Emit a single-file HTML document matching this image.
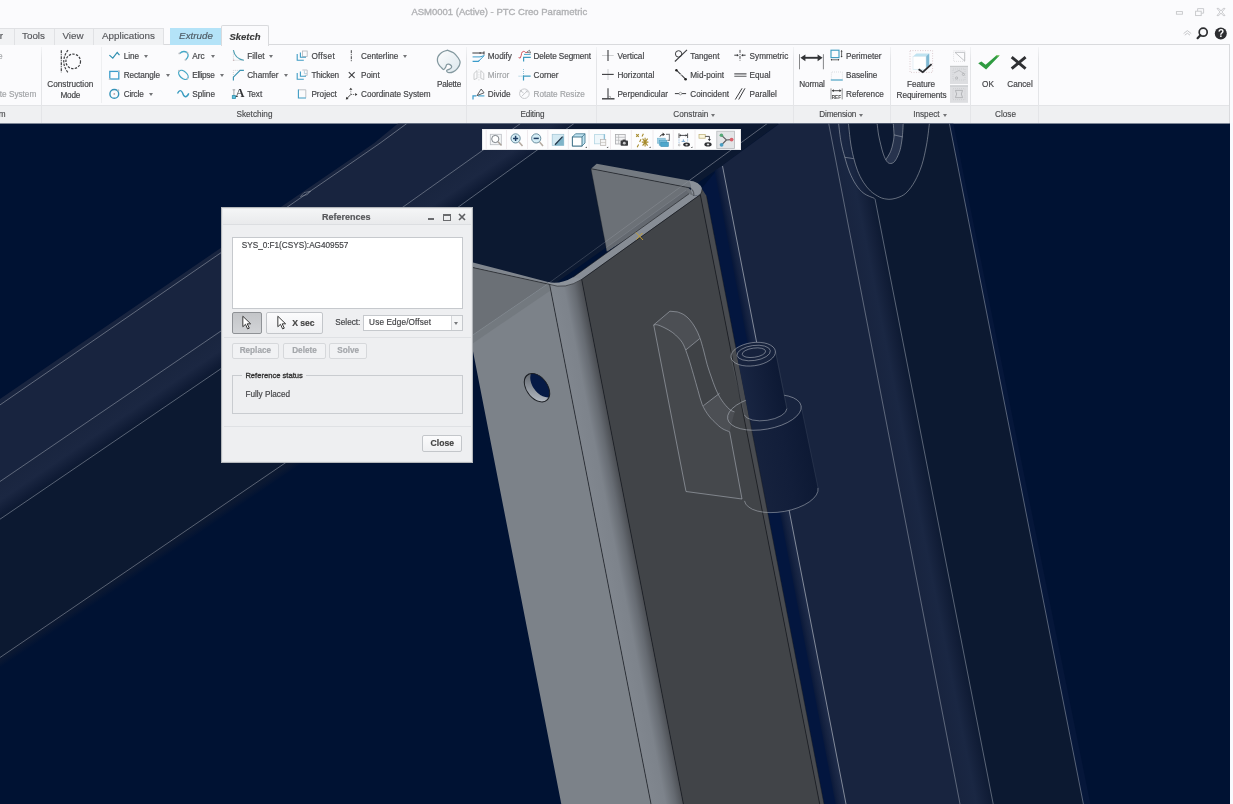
<!DOCTYPE html><html><head><meta charset="utf-8"><title>Creo</title><style>
*{box-sizing:border-box}
html,body{margin:0;padding:0}
body{width:1233px;height:804px;overflow:hidden;position:relative;background:#fbfbfd;font-family:"Liberation Sans",sans-serif;font-size:8.2px;color:#444548}
.a{position:absolute}
.t{position:absolute;white-space:nowrap;line-height:10px;height:10px;-webkit-text-stroke:0.18px}
.g{color:#a2a4a7}
.sep{position:absolute;width:1px;background:linear-gradient(#f3f4f6,#e4e5e8 12px);top:47px;height:76px}
.dd{position:absolute;width:0;height:0;border-left:2.8px solid transparent;border-right:2.8px solid transparent;border-top:3.2px solid #737477}
.tab{position:absolute;top:28px;height:17px;background:#f1f2f4;border:1px solid #e0e1e4;border-bottom:none;font-size:9.8px;line-height:14.6px;color:#55565a;-webkit-text-stroke:0.15px #55565a;text-align:center}
.gl{position:absolute;top:110px;line-height:10px;white-space:nowrap;color:#4a4b4e;-webkit-text-stroke:0.15px}
</style></head><body><div id="root" style="position:absolute;left:0;top:0;width:1233px;height:804px;will-change:transform">
<div class="t" style="left:411.4px;top:6px;font-size:9.5px;line-height:12px;height:12px;color:#b0b1b4;-webkit-text-stroke:0.35px #b0b1b4">ASM0001 (Active) - PTC Creo Parametric</div>
<div class="a" style="left:0;top:44px;width:1230px;height:80px;background:#fbfbfd;border-top:1px solid #d9dadd;border-right:1px solid #d9dadd"></div>
<div class="a" style="left:0;top:105px;width:1229px;height:18px;background:#eff0f2;border-top:1px solid #e3e4e7"></div>
<div class="tab" style="left:-6px;width:21px;text-align:right;padding-right:11px">r</div>
<div class="tab" style="left:14px;width:41px;padding-right:2px">Tools</div>
<div class="tab" style="left:54px;width:40px;padding-right:2px">View</div>
<div class="tab" style="left:93px;width:71px">Applications</div>
<div class="tab" style="left:170px;width:52px;background:#b4e3f8;border-color:#b4e3f8;font-style:italic;color:#4a5a66">Extrude</div>
<div class="tab" style="left:221px;top:25px;height:21px;width:48px;background:#fbfbfd;border-color:#d9dadd;font-style:italic;font-weight:bold;color:#333;font-size:9.5px;line-height:21px;border-radius:2px 2px 0 0">Sketch</div>
<div class="sep" style="left:41px"></div>
<div class="sep" style="left:466px"></div>
<div class="sep" style="left:596px"></div>
<div class="sep" style="left:793px"></div>
<div class="sep" style="left:890px"></div>
<div class="sep" style="left:970px"></div>
<div class="sep" style="left:1038px"></div>
<div class="sep" style="left:101px;height:56px;top:47px;background:#eeeff1"></div>
<div class="t g" style="left:-2px;top:51.7px">e</div>
<div class="t g" style="left:-0.2px;top:89.7px">te System</div>
<div class="t" style="left:47.3px;top:79.6px;width:46px;text-align:center">Construction</div>
<div class="t" style="left:47.3px;top:90.5px;width:46px;text-align:center;letter-spacing:-0.25px">Mode</div>
<div class="t " style="left:123.7px;top:51.7px">Line</div>
<div class="dd" style="left:144.0px;top:54.5px"></div>
<div class="t " style="left:123.7px;top:70.7px;letter-spacing:-0.07px">Rectangle</div>
<div class="dd" style="left:165.5px;top:73.5px"></div>
<div class="t " style="left:123.7px;top:89.7px;letter-spacing:-0.18px">Circle</div>
<div class="dd" style="left:149.3px;top:92.5px"></div>
<div class="t " style="left:192.2px;top:51.7px">Arc</div>
<div class="dd" style="left:210.9px;top:54.5px"></div>
<div class="t " style="left:192.2px;top:70.7px;letter-spacing:-0.26px">Ellipse</div>
<div class="dd" style="left:220.3px;top:73.5px"></div>
<div class="t " style="left:192.2px;top:89.7px">Spline</div>
<div class="t " style="left:247.2px;top:51.7px">Fillet</div>
<div class="dd" style="left:268.5px;top:54.5px"></div>
<div class="t " style="left:247.2px;top:70.7px">Chamfer</div>
<div class="dd" style="left:284.2px;top:73.5px"></div>
<div class="t " style="left:247.2px;top:89.7px">Text</div>
<div class="t " style="left:311.4px;top:51.7px;letter-spacing:0.32px">Offset</div>
<div class="t " style="left:311.4px;top:70.7px;letter-spacing:-0.16px">Thicken</div>
<div class="t " style="left:311.4px;top:89.7px">Project</div>
<div class="t " style="left:361px;top:51.7px">Centerline</div>
<div class="dd" style="left:402.9px;top:54.5px"></div>
<div class="t " style="left:361px;top:70.7px">Point</div>
<div class="t " style="left:361px;top:89.7px">Coordinate System</div>
<div class="t" style="left:434px;top:79.6px;width:30px;text-align:center;letter-spacing:-0.2px">Palette</div>
<div class="t " style="left:487.8px;top:51.7px">Modify</div>
<div class="t g" style="left:487.8px;top:70.7px">Mirror</div>
<div class="t " style="left:487.8px;top:89.7px">Divide</div>
<div class="t " style="left:533.5px;top:51.7px;letter-spacing:-0.09px">Delete Segment</div>
<div class="t " style="left:533.5px;top:70.7px">Corner</div>
<div class="t g" style="left:533.5px;top:89.7px">Rotate Resize</div>
<div class="t " style="left:617.4px;top:51.7px">Vertical</div>
<div class="t " style="left:617.4px;top:70.7px">Horizontal</div>
<div class="t " style="left:617.4px;top:89.7px">Perpendicular</div>
<div class="t " style="left:690.3px;top:51.7px">Tangent</div>
<div class="t " style="left:690.3px;top:70.7px">Mid-point</div>
<div class="t " style="left:690.3px;top:89.7px">Coincident</div>
<div class="t " style="left:749.6px;top:51.7px">Symmetric</div>
<div class="t " style="left:749.6px;top:70.7px">Equal</div>
<div class="t " style="left:749.6px;top:89.7px">Parallel</div>
<div class="t" style="left:797px;top:79.6px;width:30px;text-align:center;letter-spacing:-0.15px">Normal</div>
<div class="t " style="left:846px;top:51.7px">Perimeter</div>
<div class="t " style="left:846px;top:70.7px">Baseline</div>
<div class="t " style="left:846px;top:89.7px">Reference</div>
<div class="t" style="left:891px;top:79.6px;width:60px;text-align:center">Feature</div>
<div class="t" style="left:891px;top:90.5px;width:61px;text-align:center;letter-spacing:-0.1px">Requirements</div>
<div class="t" style="left:973px;top:79.6px;width:30px;text-align:center">OK</div>
<div class="t" style="left:1000px;top:79.6px;width:40px;text-align:center">Cancel</div>
<div class="gl" style="left:-1.2px">m</div>
<div class="gl" style="left:236.5px">Sketching</div>
<div class="gl" style="left:520.5px;letter-spacing:-0.18px">Editing</div>
<div class="gl" style="left:673.3px">Constrain</div><div class="dd" style="left:711.3px;top:113.6px"></div>
<div class="gl" style="left:819.3px;letter-spacing:-0.2px">Dimension</div><div class="dd" style="left:859.3px;top:113.6px"></div>
<div class="gl" style="left:913.2px">Inspect</div><div class="dd" style="left:942.8px;top:113.6px"></div>
<div class="gl" style="left:995px">Close</div>
<svg class="a" style="left:0;top:44px" width="1233" height="62" viewBox="0 44 1233 62">
<defs><linearGradient id="pal" x1="0" y1="0" x2="1" y2="1"><stop offset="0" stop-color="#fdfdfe"/><stop offset="1" stop-color="#dbe6ec"/></linearGradient></defs>
<g fill="none" stroke-linecap="butt">
<!-- construction -->
<path d="M61.3,50.2V72.6" stroke="#3f4043" stroke-width="1.2" stroke-dasharray="3 1 1 1"/>
<path d="M68,50.2 Q59.5,61.4 68,72.6" stroke="#3f4043" stroke-width="1.2" stroke-dasharray="2.4 1.2"/>
<circle cx="73.2" cy="61.4" r="7.3" stroke="#3f4043" stroke-width="1.2" stroke-dasharray="2.4 1.3"/>
<!-- line / rectangle / circle -->
<path d="M109.4,55.1 L112.8,58.1 L117.2,52.5 L119.5,55.1" stroke="#2f8fb0" stroke-width="1.2"/>
<rect x="109.8" y="71.4" width="9" height="7.6" stroke="#3b9ccb" stroke-width="1.3"/><circle cx="109.6" cy="79.2" r="0.9" fill="#c5c8cc" stroke="none"/><circle cx="119" cy="71.2" r="0.9" fill="#c5c8cc" stroke="none"/>
<circle cx="114.3" cy="93.9" r="4.4" stroke="#3593b8" stroke-width="1.4"/><circle cx="114.3" cy="93.9" r="0.9" fill="#b9a3a6" stroke="none"/><circle cx="118.3" cy="90.2" r="1" fill="#b4bcc4" stroke="none"/>
<!-- arc / ellipse / spline -->
<path d="M179.6,53.6 Q183,50.2 186.8,52.4 Q190,55.8 185.7,59.8" stroke="#43a7c6" stroke-width="1.3"/><circle cx="179.3" cy="53.4" r="0.9" fill="#b8bcc1" stroke="none"/><circle cx="187.5" cy="52.6" r="0.9" fill="#b8bcc1" stroke="none"/><circle cx="185.4" cy="59.8" r="0.9" fill="#b8bcc1" stroke="none"/>
<ellipse cx="183.4" cy="74.9" rx="5.6" ry="3.4" transform="rotate(42 183.4 74.9)" stroke="#43a7c6" stroke-width="1.3"/><circle cx="179" cy="70.6" r="0.8" fill="#b8bcc1" stroke="none"/><circle cx="187.4" cy="78.6" r="0.8" fill="#b8bcc1" stroke="none"/>
<path d="M177.5,93.6 C179,90 181.2,89.4 182.6,93 C184,97.6 186.6,98.2 188.8,93.4" stroke="#3a9cc0" stroke-width="1.4"/>
<!-- fillet / chamfer / text -->
<path d="M233.4,50.4V60.3H243.9" stroke="#b9bdc2" stroke-width="0.7" stroke-dasharray="1 1"/><path d="M233.4,50.2 Q235,59 243.9,60.3" stroke="#4f9fb3" stroke-width="1.1"/><circle cx="233.6" cy="60.3" r="0.8" fill="#c9b7ba" stroke="none"/>
<path d="M233.4,77V70.4H240.2" stroke="#b9bdc2" stroke-width="0.7" stroke-dasharray="1 1"/><path d="M233.4,80.4V77.2L240.1,70.4H243.9" stroke="#3d95b3" stroke-width="1.2"/>
<path d="M232.6,89.8h2.6M233.9,89.8V96" stroke="#8d9096" stroke-width="0.8"/><rect x="232.3" y="95.6" width="3.2" height="2.8" fill="#5fc0dc" stroke="#2c8fae" stroke-width="0.8"/>
<!-- offset / thicken / project -->
<rect x="302.4" y="51" width="4.8" height="5.4" stroke="#b3b6bb" stroke-width="0.8"/><path d="M300.4,52.6V57.3H306" stroke="#3f9cc4" stroke-width="1.1"/><path d="M297.2,54V60.3H303.8" stroke="#3f9cc4" stroke-width="1.1"/>
<path d="M302.4,70 h4.8v5.4h-2.4" stroke="#b3b6bb" stroke-width="0.8"/><path d="M304.4,70.6v3h2.6" stroke="#a6c5d6" stroke-width="0.8"/><path d="M300.4,71.6V76.3H306" stroke="#3f9cc4" stroke-width="1.1"/><path d="M297.2,73V79.3H303.8" stroke="#3f9cc4" stroke-width="1.1"/>
<path d="M298.4,89.8H305.8V97.6" stroke="#b9bcc1" stroke-width="0.9"/><path d="M298.4,89.6V98H306" stroke="#3f9cc4" stroke-width="1.1"/>
<!-- centerline / point / csys -->
<path d="M351.3,50.2V61.8" stroke="#444548" stroke-width="1" stroke-dasharray="3 1 1 1"/>
<path d="M348.8,72.2L354.6,77.8M354.6,72.2L348.8,77.8" stroke="#3c3d40" stroke-width="1.1"/>
<path d="M350.8,94.3V89.6" stroke="#555" stroke-width="0.8" stroke-dasharray="1 1"/><path d="M350.8,94.5H355.4" stroke="#555" stroke-width="0.8" stroke-dasharray="1.2 0.8"/><path d="M350.8,94.5L347.2,98.2" stroke="#333" stroke-width="0.9"/>
<path d="M349.2,89.8h3.2l-1.6,-2z M355.2,93h0l2.2,1.5l-2.2,1.5z M345.8,99.5l0.6,-2.8l2.2,2.2z" fill="#333" stroke="none"/>
<!-- palette -->
<path d="M447.5,50.2 C446.8,50.4 444.8,50.9 443.5,51.5 C442.2,52.1 440.9,53.1 440.0,54.0 C439.1,54.9 438.3,56.0 437.9,57.0 C437.5,58.0 437.4,59.0 437.4,59.9 C437.4,60.8 437.6,61.7 437.9,62.6 C438.2,63.5 438.6,64.3 439.2,65.1 C439.8,65.9 440.5,66.7 441.2,67.4 C441.9,68.1 442.9,69.5 443.6,69.5 C444.3,69.5 445.0,68.3 445.5,67.5 C446.0,66.7 446.2,65.3 446.7,64.7 C447.2,64.1 448.0,64.0 448.7,64.1 C449.4,64.2 450.6,64.9 451.1,65.5 C451.6,66.1 451.8,66.9 451.5,67.5 C451.2,68.1 450.3,68.6 449.5,69.1 C448.7,69.6 447.3,69.9 446.9,70.3 C446.5,70.7 446.5,71.2 446.9,71.6 C447.3,72.0 448.1,72.7 449.1,72.7 C450.1,72.8 451.7,72.6 453.1,71.9 C454.5,71.2 456.3,69.8 457.5,68.3 C458.7,66.8 460.0,64.4 460.1,62.7 C460.2,61.0 459.4,59.6 458.3,58.0 C457.2,56.4 455.3,54.1 453.5,52.8 C451.7,51.5 448.5,50.6 447.5,50.2 Z" fill="url(#pal)" stroke="#83989f" stroke-width="1.25" stroke-linejoin="round"/>
<!-- modify / mirror / divide -->
<path d="M472.4,53H484M484,51.4V54.6" stroke="#3a3b3e" stroke-width="1"/><path d="M481.4,53l-1.8,-1v2z" fill="#3a3b3e" stroke="none"/><path d="M472.6,56.9H480L484.2,55.6L479,60.8" stroke="#3b9ccb" stroke-width="1"/><path d="M472.6,61.4H478.4L479.6,60.2" stroke="#3b9ccb" stroke-width="1.1"/>
<path d="M474,79.6V73.4L477,70.6V78.4Z M483.8,79.6V73.4L480.8,70.6V78.4Z" stroke="#c5c7ca" stroke-width="0.9"/><path d="M478.9,69V80.8" stroke="#d2d4d7" stroke-width="0.7" stroke-dasharray="1.5 1"/>
<path d="M473,99.4V95.9H476.4" stroke="#3b9ccb" stroke-width="1.2"/><path d="M478,95.9H484.4" stroke="#3b9ccb" stroke-width="1.1"/><path d="M477,95.6L481.2,89L484,92.8Z" stroke="#4b4c4f" stroke-width="0.9"/>
<!-- delete segment / corner / rotate -->
<path d="M518.6,57.6 Q520.4,59.6 521.2,55.6 Q521.6,50.4 524.6,51.6 Q525.6,53.6 527.6,52" stroke="#d2545b" stroke-width="1"/><path d="M527,52.2l2.4,-2l1.2,2.8z" stroke="#55565a" stroke-width="0.7"/><path d="M523.6,61.5V57.3H530.8" stroke="#3d9bc0" stroke-width="1.2"/><path d="M524,54.4H530.6" stroke="#3d9bc0" stroke-width="0.9"/>
<path d="M523.5,69V76M518.6,76.2H523" stroke="#7cb7d0" stroke-width="0.8" stroke-dasharray="1 1"/><path d="M523.5,80.6V76.2H530.6" stroke="#3d9bc0" stroke-width="1.2"/>
<circle cx="524.4" cy="93.7" r="4.8" stroke="#c3c5c8" stroke-width="0.9"/><path d="M521.6,96.4L527.2,91M521,91.2l2.6,1.8" stroke="#c3c5c8" stroke-width="0.9"/><path d="M527.8,90.4l-2.4,0.4l2,2z M519.6,89.8l2.6,0.4l-1.6,2z" fill="#c3c5c8" stroke="none"/>
<!-- vertical / horizontal / perpendicular -->
<path d="M602,55.5H613.7" stroke="#c7c9cc" stroke-width="0.9"/><path d="M608,49.9V61" stroke="#3c3d40" stroke-width="1.1"/>
<path d="M608,69V80" stroke="#c7c9cc" stroke-width="0.9"/><path d="M602,74.4H613.7" stroke="#3c3d40" stroke-width="1.1"/>
<path d="M608,88.3V98.6" stroke="#3c3d40" stroke-width="1.1"/><path d="M602,98.8H614.5" stroke="#3c3d40" stroke-width="1.4"/><path d="M608.2,96.4h2.2v2.2" stroke="#77787b" stroke-width="0.6"/>
<!-- tangent / midpoint / coincident -->
<circle cx="678.6" cy="53.9" r="3.2" stroke="#3c3d40" stroke-width="1"/><path d="M674.9,61.5L687,49.9" stroke="#3c3d40" stroke-width="1.1"/>
<path d="M676.4,70.2L685.6,79.2" stroke="#3c3d40" stroke-width="1.1"/><circle cx="676.4" cy="70.2" r="1.2" fill="#222" stroke="none"/><circle cx="685.6" cy="79.2" r="1.3" fill="#222" stroke="none"/><circle cx="681" cy="74.7" r="0.9" fill="#c9cacc" stroke="none"/>
<path d="M674.9,93.6H679M681.8,93.6H686.1" stroke="#3c3d40" stroke-width="1"/><circle cx="680.4" cy="93.6" r="1.3" fill="#fff" stroke="#77787b" stroke-width="0.7"/>
<!-- symmetric / equal / parallel -->
<path d="M740,49.9V60.6" stroke="#3c3d40" stroke-width="0.9" stroke-dasharray="3 1 1 1"/><path d="M734.3,55.2H738M745.6,55.2H742" stroke="#3c3d40" stroke-width="1"/><path d="M738.9,55.2l-2,-1.3v2.6z M741.1,55.2l2,-1.3v2.6z" fill="#3c3d40" stroke="none"/>
<path d="M734.3,73.9H746.5M734.3,76.2H746.5" stroke="#5a5b5e" stroke-width="1.1"/>
<path d="M735.3,99.5L742.1,88.3M738.7,99.5L745,88.3" stroke="#3c3d40" stroke-width="1"/>
<!-- normal -->
<path d="M799.5,54.2V69.3M823.4,54.2V69.3" stroke="#77787b" stroke-width="0.9"/><path d="M803.6,57.8H819.4" stroke="#333437" stroke-width="1.9"/><path d="M800.4,57.8l5,-3.4v6.8z M822.6,57.8l-5,-3.4v6.8z" fill="#333437" stroke="none"/>
<!-- perimeter / baseline / reference -->
<rect x="831" y="50.2" width="8" height="7.4" stroke="#3d9bc0" stroke-width="1.1"/><path d="M841.6,51v5.6M831.6,59.8h6.8" stroke="#444" stroke-width="0.8"/><path d="M840.6,51.6l1,-1.6l1,1.6z M840.6,56l1,1.6l1,-1.6z M832,58.8l-1.4,1l1.4,1z M838,58.8l1.4,1l-1.4,1z" fill="#333" stroke="none"/>
<path d="M831.4,79.4V72H842.4V79.4" stroke="#cfd1d4" stroke-width="0.7" stroke-dasharray="1 1"/><path d="M830.8,80H842.8" stroke="#3d9bc0" stroke-width="1.1"/>
<path d="M831,88.4V99.4M842.2,88.4V99.4" stroke="#77787b" stroke-width="0.8"/><path d="M832.6,90.7H840.6" stroke="#333" stroke-width="0.9"/><path d="M831.6,90.7l2.2,-1.4v2.8z M841.6,90.7l-2.2,-1.4v2.8z" fill="#333" stroke="none"/>
<!-- feature requirements -->
<rect x="910" y="50.6" width="22.6" height="21.8" stroke="#d6c3c6" stroke-width="0.9" stroke-dasharray="0.9 1.6"/>
<path d="M913,56.4L916.4,53.4H929.2V66L926,69.2H913Z" fill="#bfe2f0" stroke="none"/><path d="M926,56.4L929.2,53.4V66L926,69.2Z" fill="#7fb9d3" stroke="none"/><rect x="913" y="56.4" width="13" height="12.8" fill="#fff" stroke="#cfe4ee" stroke-width="0.5"/>
<path d="M918.6,69.2L922.8,72.2L931.6,64.2" stroke="#2b2c2f" stroke-width="1.8"/>
<!-- small inspect icons -->
<rect x="953.6" y="50.8" width="11.4" height="10.6" stroke="#d5d6d9" stroke-width="0.7" stroke-dasharray="1 1"/><path d="M955,52.4L964.6,61V52.4Z" stroke="#b5b7ba" stroke-width="0.8"/>
<rect x="950" y="66" width="18" height="18" fill="#dddee1" stroke="none"/><path d="M950,66.3h18" stroke="#b9bbbe" stroke-width="0.8"/><rect x="953" y="69" width="12" height="11" stroke="#c5c6c9" stroke-width="0.6" stroke-dasharray="1 1"/><path d="M954,73L959,70.4L964,73.6" stroke="#b7b9bc" stroke-width="0.8"/><circle cx="956.6" cy="78" r="1.1" stroke="#a9abae" stroke-width="0.7"/><circle cx="963.4" cy="74.4" r="1.1" stroke="#a9abae" stroke-width="0.7"/>
<rect x="950" y="85.6" width="18" height="17.2" fill="#dddee1" stroke="none"/><path d="M950,85.9h18" stroke="#b9bbbe" stroke-width="0.8"/><rect x="953" y="88.6" width="12" height="11" stroke="#c5c6c9" stroke-width="0.6" stroke-dasharray="1 1"/><path d="M955.4,90.4H962.6 Q960,94 962.6,97.6H955.4Q958,94 955.4,90.4Z" stroke="#a9abae" stroke-width="0.8"/>
</g>
<!-- OK / cancel -->
<path d="M978.2,63.2L981.4,61.4L985.6,64.8L996.6,55.2L999.6,55.4L986.1,69.4Z" fill="#2f9b41"/><path d="M996.6,55.2L999.6,55.4L998.4,56.6L995.6,56.1Z" fill="#8fd06a"/>
<path d="M1011.7,57.2L1025.6,68.7M1025.6,57.2L1011.7,68.7" stroke="#2f3033" stroke-width="2.9" fill="none"/>
<!-- Text "A" -->
<text x="235.6" y="97.4" font-family="Liberation Serif, serif" font-weight="bold" font-size="12.4" fill="#333437">A</text>
<text x="831.8" y="98.6" font-family="Liberation Sans, sans-serif" font-weight="bold" font-size="4.6" fill="#444">REF</text>
</svg>
<!-- window controls -->
<svg class="a" style="left:1170px;top:0" width="63" height="44" viewBox="1170 0 63 44">
<g fill="none" stroke="#c5c6c9" stroke-width="0.9">
<rect x="1176.4" y="11.6" width="6" height="2.6"/>
<rect x="1195.6" y="11.2" width="5.6" height="4.4"/><path d="M1197.6,11V8.6H1203.6V13.2H1201.4"/>
<path d="M1217,8.4l1.8,0l2.2,2.6l2.2,-2.6l1.8,0l-3,3.6l3,3.6l-1.8,0l-2.2,-2.6l-2.2,2.6l-1.8,0l3,-3.6z"/>
<path d="M1183.6,33.6L1187.4,30.6L1191.2,33.6M1184.8,35.2L1187.4,33.2L1190,35.2" stroke="#c0c1c4"/>
</g>
<circle cx="1203.2" cy="32.2" r="4" fill="none" stroke="#2d2e31" stroke-width="1.7"/><path d="M1200.4,35.2L1197.6,38.2" stroke="#2d2e31" stroke-width="2.2" stroke-linecap="round"/>
<circle cx="1220.8" cy="33.4" r="6" fill="#2d2e31"/>
<text x="1217.9" y="37" font-family="Liberation Sans, sans-serif" font-weight="bold" font-size="10" fill="#fff">?</text>
</svg>

<svg class="a" style="left:0;top:0" width="1233" height="804" viewBox="0 0 1233 804">
<defs>
<clipPath id="vp"><rect x="0" y="123.5" width="1230.2" height="681"/></clipPath>
<linearGradient id="g23" gradientUnits="userSpaceOnUse" x1="300" y1="277" x2="317.7" y2="303"><stop offset="0" stop-color="#19253f"/><stop offset="0.5" stop-color="#1b2742"/><stop offset="0.85" stop-color="#101c36"/><stop offset="1" stop-color="#0c1931"/></linearGradient>
<linearGradient id="gBC" gradientUnits="userSpaceOnUse" x1="866" y1="321" x2="899" y2="314.5"><stop offset="0" stop-color="#18243f"/><stop offset="0.45" stop-color="#1a2743"/><stop offset="0.78" stop-color="#121e38"/><stop offset="1" stop-color="#0c1931"/></linearGradient>
<linearGradient id="gC" gradientUnits="userSpaceOnUse" x1="573.5" y1="413" x2="606" y2="406.6"><stop offset="0" stop-color="#81878f"/><stop offset="0.45" stop-color="#7d838b"/><stop offset="0.75" stop-color="#666b72"/><stop offset="1" stop-color="#4a4d52"/></linearGradient>
<linearGradient id="gPL" gradientUnits="userSpaceOnUse" x1="743.5" y1="321.7" x2="752.5" y2="320"><stop offset="0" stop-color="#07173a"/><stop offset="0.45" stop-color="#14213f"/><stop offset="1" stop-color="#1d2a48"/></linearGradient>
<linearGradient id="gE5" gradientUnits="userSpaceOnUse" x1="200" y1="521" x2="205.6" y2="529.3"><stop offset="0" stop-color="#0c1931"/><stop offset="0.35" stop-color="#0b1832"/><stop offset="1" stop-color="#001233"/></linearGradient>
</defs>
<g clip-path="url(#vp)">
<rect x="0" y="120" width="1233" height="700" fill="#001233"/>
<polygon points="0.0,399.0 374.0,143.2 398.0,123.5 520.5,123.5 403.2,206.9 0.0,481.5" fill="#18243f" />
<polygon points="0.0,481.5 403.2,206.9 520.5,123.5 574.0,123.5 458.5,206.9 0.0,519.2" fill="url(#g23)" />
<polygon points="0.0,519.2 458.5,206.9 574.0,123.5 779.0,123.5 716.0,170.0 553.0,285.0 549.0,283.0 0.0,657.5" fill="#0c1931" />
<polygon points="0.0,657.0 549.0,282.6 557.0,289.0 0.0,669.0" fill="url(#gE5)" />
<polygon points="702.0,188.0 716.0,171.0 837.0,804.0 823.0,804.0" fill="#03163f" />
<polygon points="779.7,123.5 716.0,170.0 837.0,804.0 960.0,804.0 828.7,123.5" fill="#18243f" />
<polygon points="714.5,171.0 835.5,804.0 846.0,804.0 722.5,166.0" fill="url(#gPL)" />
<polygon points="828.7,123.5 960.0,804.0 993.2,804.0 860.3,123.5" fill="url(#gBC)" />
<polygon points="860.3,123.5 993.2,804.0 1083.4,804.0 949.4,123.5" fill="#0c1931" />
<polygon points="949.4,123.5 1083.4,804.0 1090.4,804.0 953.4,123.5" fill="#06173a" />
<line x1="722.5" y1="166.0" x2="846.0" y2="804.0" stroke="#aeb4bd" stroke-width="1.0" stroke-opacity="0.7"/>
<line x1="828.7" y1="123.5" x2="960.0" y2="804.0" stroke="#aeb4bd" stroke-width="0.8" stroke-opacity="0.62"/>
<line x1="875.0" y1="198.8" x2="993.2" y2="804.0" stroke="#aeb4bd" stroke-width="0.8" stroke-opacity="0.62"/>
<line x1="949.4" y1="123.5" x2="1083.4" y2="804.0" stroke="#aeb4bd" stroke-width="0.8" stroke-opacity="0.62"/>
<path d="M848.5,123.7 C848.8,126.8 849.7,136.4 850.5,142.0 C851.3,147.6 852.3,152.6 853.5,157.3 C854.7,162.1 855.9,166.3 857.5,170.5 C859.1,174.7 861.2,178.8 863.4,182.2 C865.6,185.6 867.8,188.5 870.5,191.0 C873.2,193.5 877.0,195.8 879.6,197.1 C882.2,198.4 883.9,198.7 886.0,199.0 C888.1,199.3 889.7,199.5 892.0,199.1 C894.3,198.7 897.5,198.0 900.0,196.8 C902.5,195.6 904.5,194.7 907.0,192.1 C909.5,189.5 912.5,185.6 915.0,181.0 C917.5,176.4 920.0,170.8 921.9,164.8 C923.8,158.8 925.2,151.8 926.5,145.0 C927.8,138.2 928.9,127.2 929.4,123.7 Z" fill="#0d1a33" stroke="none" stroke-width="0.8" stroke-opacity="1" />
<path d="M877.1,123.7 C877.4,125.6 878.0,131.5 878.6,135.0 C879.2,138.5 880.1,141.9 880.8,144.9 C881.5,147.9 882.2,150.5 883.0,153.0 C883.8,155.5 884.9,158.2 885.8,159.8 C886.7,161.4 887.4,162.2 888.2,162.8 C889.0,163.4 889.9,163.5 890.8,163.5 C891.7,163.5 892.6,163.2 893.4,162.6 C894.2,162.0 894.9,161.2 895.8,159.8 C896.7,158.4 897.8,156.1 898.6,154.0 C899.4,151.9 900.1,150.4 900.7,147.4 C901.3,144.4 902.0,139.9 902.4,136.0 C902.8,132.1 903.1,125.8 903.2,123.7 Z" fill="#0c1932" stroke="none" stroke-width="0.8" stroke-opacity="1" />
<path d="M893.3,123.7 C893.4,125.6 894.0,131.7 894.0,134.9 C894.0,138.1 893.6,140.2 893.0,143.0 C892.4,145.8 891.8,148.7 890.6,151.5 C889.4,154.3 886.6,158.4 885.8,159.8 L885.8,159.8 C886.2,160.3 887.4,162.2 888.2,162.8 C889.0,163.4 889.9,163.5 890.8,163.5 C891.7,163.5 892.6,163.2 893.4,162.6 C894.2,162.0 894.9,161.2 895.8,159.8 C896.7,158.4 897.8,156.1 898.6,154.0 C899.4,151.9 900.1,150.4 900.7,147.4 C901.3,144.4 902.0,139.9 902.4,136.0 C902.8,132.1 903.1,125.8 903.2,123.7 Z" fill="#27334d" stroke="none" stroke-width="0.8" stroke-opacity="1" />
<path d="M838.6,123.7 C839.0,126.8 840.0,136.4 841.0,142.0 C842.0,147.6 843.4,152.3 844.8,157.3 C846.2,162.3 847.6,167.4 849.5,172.0 C851.4,176.6 853.6,181.1 856.0,184.7 C858.4,188.3 860.9,191.2 864.0,193.5 C867.1,195.8 872.8,197.6 874.6,198.4" fill="none" stroke="#b4bac3" stroke-width="0.75" stroke-opacity="0.7" />
<path d="M848.5,123.7 C848.8,126.8 849.7,136.4 850.5,142.0 C851.3,147.6 852.3,152.6 853.5,157.3 C854.7,162.1 855.9,166.3 857.5,170.5 C859.1,174.7 861.2,178.8 863.4,182.2 C865.6,185.6 867.8,188.5 870.5,191.0 C873.2,193.5 877.0,195.8 879.6,197.1 C882.2,198.4 883.9,198.7 886.0,199.0 C888.1,199.3 889.7,199.5 892.0,199.1 C894.3,198.7 897.5,198.0 900.0,196.8 C902.5,195.6 904.5,194.7 907.0,192.1 C909.5,189.5 912.5,185.6 915.0,181.0 C917.5,176.4 920.0,170.8 921.9,164.8 C923.8,158.8 925.2,151.8 926.5,145.0 C927.8,138.2 928.9,127.2 929.4,123.7" fill="none" stroke="#b4bac3" stroke-width="0.75" stroke-opacity="0.7" />
<path d="M877.1,123.7 C877.4,125.6 878.0,131.5 878.6,135.0 C879.2,138.5 880.1,141.9 880.8,144.9 C881.5,147.9 882.2,150.5 883.0,153.0 C883.8,155.5 884.9,158.2 885.8,159.8 C886.7,161.4 887.4,162.2 888.2,162.8 C889.0,163.4 889.9,163.5 890.8,163.5 C891.7,163.5 892.6,163.2 893.4,162.6 C894.2,162.0 894.9,161.2 895.8,159.8 C896.7,158.4 897.8,156.1 898.6,154.0 C899.4,151.9 900.1,150.4 900.7,147.4 C901.3,144.4 902.0,139.9 902.4,136.0 C902.8,132.1 903.1,125.8 903.2,123.7" fill="none" stroke="#b4bac3" stroke-width="0.75" stroke-opacity="0.7" />
<path d="M893.3,123.7 C893.4,125.6 894.0,131.7 894.0,134.9 C894.0,138.1 893.6,140.2 893.0,143.0 C892.4,145.8 891.8,148.7 890.6,151.5 C889.4,154.3 886.6,158.4 885.8,159.8" fill="none" stroke="#b4bac3" stroke-width="0.75" stroke-opacity="0.7" />
<polyline points="844.8,157.3 853.5,158.6" fill="none" stroke="#b4bac3" stroke-width="0.7" stroke-opacity="0.7" stroke-linejoin="round"/>
<polyline points="894.0,134.9 902.5,136.9" fill="none" stroke="#b4bac3" stroke-width="0.7" stroke-opacity="0.7" stroke-linejoin="round"/>
<defs><linearGradient id="gp1" gradientUnits="userSpaceOnUse" x1="733" y1="380" x2="782" y2="372"><stop offset="0" stop-color="#1b2845"/><stop offset="0.55" stop-color="#131f3b"/><stop offset="1" stop-color="#0c1833"/></linearGradient><linearGradient id="gp2" gradientUnits="userSpaceOnUse" x1="740" y1="460" x2="815" y2="447"><stop offset="0" stop-color="#18243f"/><stop offset="0.6" stop-color="#121e3a"/><stop offset="1" stop-color="#0c1833"/></linearGradient></defs>
<path d="M727.6,418.9 L744.5,500.9 A37.3,17.3 -10 0 0 818,487.9 L801.1,405.9 Z" fill="url(#gp2)"/>
<ellipse cx="764.4" cy="412.4" rx="37.3" ry="16.9" transform="rotate(-10 764.4 412.4)" fill="#17233e"/>
<path d="M731,357.3 L744.4,415 A21.6,9.6 -8 0 0 786.9,408.6 L775.4,351.1 Z" fill="url(#gp1)"/>
<ellipse cx="753.2" cy="354.2" rx="22.4" ry="11.6" transform="rotate(-8 753.2 354.2)" fill="#16223d"/>
<polygon points="591.0,168.7 688.0,187.5 692.0,191.0 694.0,196.0 606.9,251.4" fill="#6c7177" />
<path d="M591,168.7 L596.7,163.8 L689,180.4 Q700,182 702,188.5 L700,194 Q694,187 688,187.5 Z" fill="#747a81" stroke="none" stroke-width="0.8" stroke-opacity="1" />
<path d="M689,180.4 Q700,182 702,189 Q702.5,193 700.5,194.6 L694,196 Q690,191.5 691,186 Q690,182 689,180.4Z" fill="#8a9098" stroke="none" stroke-width="0.8" stroke-opacity="1" />
<polygon points="606.9,251.4 606.2,247.6 686.0,190.2 689.0,193.8" fill="#646970" />
<polygon points="573.4,276.9 689.0,193.8 694.0,196.0 700.3,194.6 581.7,279.4 576.0,281.5" fill="#878d95" />
<polygon points="450.0,256.5 473.0,262.5 547.0,281.8 549.6,284.4 473.0,267.6 450.0,262.5" fill="#80868e" />
<clipPath id="ff"><polygon points="450.0,262.5 473.0,267.6 549.6,284.4 651.0,804.0 561.3,804.0 454.8,258.0"/></clipPath>
<polygon points="450.0,262.5 473.0,267.6 549.6,284.4 651.0,804.0 561.3,804.0 454.8,258.0" fill="#7c8289" />
<polygon points="0.0,657.5 560.0,275.5 560.0,100.0 0.0,100.0" fill="#6b7076" clip-path="url(#ff)"/>
<polygon points="0.0,657.5 560.0,275.5 560.0,283.9 0.0,666.0" fill="#73797f" clip-path="url(#ff)"/>
<polygon points="549.6,284.4 557.0,283.5 565.3,282.5 574.0,279.5 581.7,279.4 683.4,804.0 651.0,804.0" fill="url(#gC)" />
<polygon points="581.7,279.4 700.3,194.6 819.7,804.0 683.4,804.0" fill="#414448" />
<polygon points="700.3,194.6 702.0,189.0 706.5,196.0 824.0,804.0 819.7,804.0" fill="#484b50" />
<path d="M547,281.8 Q560,285 573.4,276.9 L581.7,279.4 Q565,290 549.6,284.4 Z" fill="#8d939b" stroke="none" stroke-width="0.8" stroke-opacity="1" />
<defs><linearGradient id="gh" x1="0" y1="-1" x2="0.3" y2="1" gradientUnits="userSpaceOnUse"><stop offset="0" stop-color="#62676e"/><stop offset="0.55" stop-color="#8f959d"/><stop offset="1" stop-color="#b4bac2"/></linearGradient></defs>
<g transform="matrix(12.5,3.0,2.3,13.9,537,387.7)"><clipPath id="hc"><circle r="1"/></clipPath><circle r="1" fill="url(#gh)"/><circle r="1" cx="0.56" cy="-0.445" fill="#061a45" clip-path="url(#hc)"/><circle r="1" fill="none" stroke="#1a1d22" stroke-width="0.075"/></g>
<polyline points="591.0,168.7 688.0,187.5" fill="none" stroke="#17191c" stroke-width="0.8" stroke-opacity="0.8" stroke-linejoin="round"/>
<polyline points="591.0,168.7 606.9,251.4" fill="none" stroke="#17191c" stroke-width="0.8" stroke-opacity="0.35" stroke-linejoin="round"/>
<polyline points="573.4,276.9 689.0,193.8" fill="none" stroke="#17191c" stroke-width="0.8" stroke-opacity="0.75" stroke-linejoin="round"/>
<polyline points="606.2,247.6 686.0,190.2" fill="none" stroke="#aeb4bd" stroke-width="0.7" stroke-opacity="0.3" stroke-linejoin="round"/>
<polyline points="581.7,279.4 700.3,194.6" fill="none" stroke="#17191c" stroke-width="0.8" stroke-opacity="0.85" stroke-linejoin="round"/>
<polyline points="450.0,262.5 473.0,267.6 549.6,284.4" fill="none" stroke="#17191c" stroke-width="0.8" stroke-opacity="0.8" stroke-linejoin="round"/>
<polyline points="549.6,284.4 651.0,804.0" fill="none" stroke="#17191c" stroke-width="0.8" stroke-opacity="0.85" stroke-linejoin="round"/>
<polyline points="581.7,279.4 683.4,804.0" fill="none" stroke="#17191c" stroke-width="0.8" stroke-opacity="0.85" stroke-linejoin="round"/>
<polyline points="700.3,194.6 819.7,804.0" fill="none" stroke="#17191c" stroke-width="0.8" stroke-opacity="0.9" stroke-linejoin="round"/>
<polyline points="706.5,196.0 824.0,804.0" fill="none" stroke="#17191c" stroke-width="0.8" stroke-opacity="0.5" stroke-linejoin="round"/>
<path d="M549.6,284.4 Q565,290 581.7,279.4" fill="none" stroke="#17191c" stroke-width="0.8" stroke-opacity="0.7" />
<path d="M688,187.5 Q694,188 694,196" fill="none" stroke="#17191c" stroke-width="0.8" stroke-opacity="0.7" />
<path d="M700.3,194.6 Q703,191 702,188.5" fill="none" stroke="#17191c" stroke-width="0.8" stroke-opacity="0.5" />
<line x1="549.0" y1="283.0" x2="690.0" y2="180.0" stroke="#aeb4bd" stroke-width="0.8" stroke-opacity="0.3"/>
<line x1="690.0" y1="180.0" x2="767.0" y2="123.7" stroke="#aeb4bd" stroke-width="0.8" stroke-opacity="0.6"/>
<line x1="473.0" y1="334.8" x2="549.0" y2="283.0" stroke="#aeb4bd" stroke-width="0.8" stroke-opacity="0.28"/>
<path d="M636,232.5 L643,240 M642.5,233 L636.5,239.5" stroke="#c9a02a" stroke-width="0.9" fill="none"/>
<path d="M653.7,324.9 C654.3,324.9 655.7,324.5 657.4,324.9 C659.1,325.3 661.5,326.3 664.0,327.5 C666.5,328.7 669.9,330.6 672.3,332.3 C674.7,334.1 676.7,335.9 678.6,338.0 C680.5,340.1 681.9,341.5 683.5,344.8 C685.1,348.1 686.8,353.0 688.5,358.0 C690.2,363.0 691.9,369.2 693.5,374.6 C695.1,380.0 696.5,385.5 698.0,390.5 C699.5,395.5 700.4,400.2 702.2,404.5 C704.0,408.8 706.5,412.7 709.0,416.0 C711.5,419.3 714.8,422.2 717.1,424.4 C719.4,426.6 720.9,427.8 723.0,429.0 C725.1,430.2 728.5,431.3 729.6,431.8 L742,499 L686,491.5 Z" fill="#45484c" stroke="none" stroke-width="0.8" stroke-opacity="1" />
<path d="M653.7,324.9 C654.3,324.9 655.7,324.5 657.4,324.9 C659.1,325.3 661.5,326.3 664.0,327.5 C666.5,328.7 669.9,330.6 672.3,332.3 C674.7,334.1 676.7,335.9 678.6,338.0 C680.5,340.1 681.9,341.5 683.5,344.8 C685.1,348.1 686.8,353.0 688.5,358.0 C690.2,363.0 691.9,369.2 693.5,374.6 C695.1,380.0 696.5,385.5 698.0,390.5 C699.5,395.5 700.4,400.2 702.2,404.5 C704.0,408.8 706.5,412.7 709.0,416.0 C711.5,419.3 714.8,422.2 717.1,424.4 C719.4,426.6 720.9,427.8 723.0,429.0 C725.1,430.2 728.5,431.3 729.6,431.8 L734.5,411.9 L734.5,411.9 C733.9,411.6 732.2,411.2 731.0,410.4 C729.8,409.6 728.6,408.6 727.1,407.0 C725.6,405.4 723.7,403.1 722.0,400.6 C720.3,398.1 718.8,395.6 717.1,392.0 C715.4,388.4 713.6,383.6 712.0,379.0 C710.4,374.4 708.6,369.5 707.2,364.7 C705.8,359.9 704.8,354.6 703.5,350.0 C702.2,345.4 701.1,341.0 699.7,337.3 C698.3,333.6 696.9,330.5 695.2,327.6 C693.6,324.7 691.7,322.1 689.8,319.9 C687.9,317.7 685.9,315.9 683.8,314.6 C681.7,313.3 678.4,312.3 677.3,311.9 L669.9,311.2 Z" fill="#4c4f54" stroke="none" stroke-width="0.8" stroke-opacity="1" />
<path d="M686,349.8 L699.7,338.6 L699.7,337.3 C700.3,339.4 702.2,345.4 703.5,350.0 C704.8,354.6 705.8,359.9 707.2,364.7 C708.6,369.5 710.4,374.4 712.0,379.0 C713.6,383.6 715.8,389.6 717.1,392.0 C718.4,394.4 719.2,393.1 719.6,393.3 L703.4,405.7 L702.2,404.5 C701.5,402.2 699.5,395.5 698.0,390.5 C696.5,385.5 695.1,380.0 693.5,374.6 C691.9,369.2 689.8,362.1 688.5,358.0 C687.2,353.9 686.4,351.2 686.0,349.8 Z" fill="#3f4246" stroke="none" stroke-width="0.8" stroke-opacity="1" />
<path d="M653.7,324.9 C654.3,324.9 655.7,324.5 657.4,324.9 C659.1,325.3 661.5,326.3 664.0,327.5 C666.5,328.7 669.9,330.6 672.3,332.3 C674.7,334.1 676.7,335.9 678.6,338.0 C680.5,340.1 681.9,341.5 683.5,344.8 C685.1,348.1 686.8,353.0 688.5,358.0 C690.2,363.0 691.9,369.2 693.5,374.6 C695.1,380.0 696.5,385.5 698.0,390.5 C699.5,395.5 700.4,400.2 702.2,404.5 C704.0,408.8 706.5,412.7 709.0,416.0 C711.5,419.3 714.8,422.2 717.1,424.4 C719.4,426.6 720.9,427.8 723.0,429.0 C725.1,430.2 728.5,431.3 729.6,431.8" fill="none" stroke="#b4bac3" stroke-width="0.8" stroke-opacity="0.68" />
<path d="M677.3,311.9 C678.4,312.3 681.7,313.3 683.8,314.6 C685.9,315.9 687.9,317.7 689.8,319.9 C691.7,322.1 693.6,324.7 695.2,327.6 C696.9,330.5 698.3,333.6 699.7,337.3 C701.1,341.0 702.2,345.4 703.5,350.0 C704.8,354.6 705.8,359.9 707.2,364.7 C708.6,369.5 710.4,374.4 712.0,379.0 C713.6,383.6 715.4,388.4 717.1,392.0 C718.8,395.6 720.3,398.1 722.0,400.6 C723.7,403.1 725.6,405.4 727.1,407.0 C728.6,408.6 729.8,409.6 731.0,410.4 C732.2,411.2 733.9,411.6 734.5,411.9" fill="none" stroke="#b4bac3" stroke-width="0.8" stroke-opacity="0.68" />
<polyline points="653.7,324.9 669.9,311.2 677.3,311.9" fill="none" stroke="#b4bac3" stroke-width="0.8" stroke-opacity="0.68" stroke-linejoin="round"/>
<polyline points="653.7,324.9 686.0,491.5 742.0,499.0 729.6,431.8" fill="none" stroke="#b4bac3" stroke-width="0.8" stroke-opacity="0.68" stroke-linejoin="round"/>
<polyline points="686.0,349.8 699.7,338.6" fill="none" stroke="#b4bac3" stroke-width="0.8" stroke-opacity="0.68" stroke-linejoin="round"/>
<polyline points="703.4,405.7 719.6,393.3" fill="none" stroke="#b4bac3" stroke-width="0.8" stroke-opacity="0.68" stroke-linejoin="round"/>
<ellipse cx="764.4" cy="412.4" rx="37.3" ry="16.9" transform="rotate(-10 764.4 412.4)" fill="none" stroke="#b4bac3" stroke-width="0.75" stroke-opacity="0.7"/>
<clipPath id="rw"><polygon points="726.3,300 769.0,520 900,520 900,300"/></clipPath>
<g clip-path="url(#rw)"><path d="M731,357.3 L744.4,415 A21.6,9.6 -8 0 0 786.9,408.6 L775.4,351.1 Z" fill="url(#gp1)"/><ellipse cx="753.2" cy="354.2" rx="22.4" ry="11.6" transform="rotate(-8 753.2 354.2)" fill="#16223d"/></g>
<ellipse cx="753.2" cy="354.2" rx="22.4" ry="11.6" transform="rotate(-8 753.2 354.2)" fill="none" stroke="#b4bac3" stroke-width="0.75" stroke-opacity="0.7"/>
<ellipse cx="753.7" cy="353" rx="16.8" ry="7.5" transform="rotate(-8 753.7 353)" fill="none" stroke="#b4bac3" stroke-width="0.75" stroke-opacity="0.7"/>
<ellipse cx="753.9" cy="352.7" rx="11.8" ry="4.6" transform="rotate(-8 753.9 352.7)" fill="none" stroke="#b4bac3" stroke-width="0.75" stroke-opacity="0.7"/>
<path d="M744.4,415 A21.6,9.6 -8 0 0 786.9,408.6" fill="none" stroke="#b4bac3" stroke-width="0.75" stroke-opacity="0.7"/>
<path d="M731,357.3 L744.4,415 M775.4,351.1 L786.9,408.6" fill="none" stroke="#b4bac3" stroke-width="0.6" stroke-opacity="0.25"/>
<path d="M744.5,500.9 A37.3,17.3 -10 0 0 818,487.9" fill="none" stroke="#b4bac3" stroke-width="0.75" stroke-opacity="0.7"/>
<path d="M801.1,405.9 L818,487.9" fill="none" stroke="#b4bac3" stroke-width="0.7" stroke-opacity="0.15"/>
<polyline points="0.0,404.9 380.0,143.2 406.8,123.5" fill="none" stroke="#aeb4bd" stroke-width="0.8" stroke-opacity="0.62" stroke-linejoin="round"/>
<polyline points="0.0,481.5 403.2,206.9 520.5,123.5" fill="none" stroke="#aeb4bd" stroke-width="0.8" stroke-opacity="0.62" stroke-linejoin="round"/>
<polyline points="0.0,519.2 458.5,206.9 574.0,123.5" fill="none" stroke="#aeb4bd" stroke-width="0.8" stroke-opacity="0.62" stroke-linejoin="round"/>
<line x1="0.0" y1="657.5" x2="473.0" y2="334.8" stroke="#aeb4bd" stroke-width="0.8" stroke-opacity="0.6"/>
<polyline points="300.5,196.5 304.0,192.6 310.6,191.2 307.4,194.6 300.5,196.5" fill="none" stroke="#aeb4bd" stroke-width="0.6" stroke-opacity="0.6" stroke-linejoin="round"/>
</g></svg>
<div class="a" style="left:1230px;top:123px;width:4px;height:681px;background:#f8fafd"></div>
<div class="a" style="left:482px;top:129px;width:259px;height:21px;background:#fdfdfe;border:1px solid #e9eaec"></div>
<svg class="a" style="left:482px;top:129px" width="259" height="21" viewBox="482 129 259 21">
<g stroke="#ebe5e8" stroke-width="0.8"><path d="M486.2,130V149 M506.5,130V149 M527.5,130V149 M547.8,130V149 M568.4,130V149 M589,130V149 M610.5,130V149 M631.4,130V149 M653,130V149 M673.3,130V149 M695,130V149"/></g>
<!-- refit -->
<rect x="490.3" y="134.3" width="11" height="10.4" fill="#f3f5f7" stroke="#b9bdc2" stroke-width="0.8"/>
<circle cx="495.3" cy="139" r="3.6" fill="#fff" stroke="#6e757c" stroke-width="0.9"/><path d="M498,141.8 L501.5,145.5" stroke="#a9a097" stroke-width="1.4"/>
<!-- zoom in -->
<circle cx="515.6" cy="138.4" r="4.6" fill="#d5edf6" stroke="#5d8596" stroke-width="0.9"/><path d="M513,138.4H518.2 M515.6,135.8V141" stroke="#1f3f63" stroke-width="1.5"/><path d="M519,142 L522.5,146" stroke="#b5aaa0" stroke-width="1.5"/>
<!-- zoom out -->
<circle cx="536.2" cy="138.4" r="4.6" fill="#d5edf6" stroke="#5d8596" stroke-width="0.9"/><path d="M533.6,138.4H538.8" stroke="#1f3f63" stroke-width="1.5"/><path d="M539.6,142 L543,146" stroke="#b5aaa0" stroke-width="1.5"/>
<!-- repaint -->
<rect x="552.2" y="134.3" width="11.6" height="11.2" fill="#d4eaf3" stroke="#9fc3d3" stroke-width="0.7"/><path d="M563.8,136 L563.8,145.5 L555,145.5 Z" fill="#7fb4c9"/><path d="M555,144.8 L562.6,136.6" stroke="#1e3347" stroke-width="1.3"/>
<!-- cube -->
<path d="M572.4,137 L575.5,133.8 L585,133.8 L585,143 L582,146 L572.4,146 Z" fill="#bfe3f1" stroke="#4d7f95" stroke-width="0.9" stroke-linejoin="round"/><rect x="572.4" y="137" width="9.6" height="9" fill="#fff" stroke="#3d6f86" stroke-width="0.9"/><path d="M582,137 L585,133.8" stroke="#3d6f86" stroke-width="0.8"/><path d="M586.8,146.5 l-1.6,1.6 h1.6z" fill="#444"/>
<!-- saved views -->
<rect x="594.4" y="134.6" width="10" height="9.2" fill="#eef7fb" stroke="#b5d6e3" stroke-width="0.8"/><rect x="600.6" y="139.6" width="5.2" height="5.8" fill="#f5f5f5" stroke="#b9b3ae" stroke-width="0.7"/><path d="M604.4,134.2V139.4" stroke="#8fc0d6" stroke-width="1.4"/><path d="M600.6,142.5h5.2" stroke="#c3bdb8" stroke-width="0.6"/><path d="M608.2,146.5 l-1.6,1.6 h1.6z" fill="#444"/>
<!-- view manager -->
<rect x="615.4" y="134.4" width="9.8" height="9.6" fill="#f4f4f5" stroke="#a8a9ac" stroke-width="0.8"/><path d="M615.4,137.3h9.8 M615.4,140.3h9.8 M618.6,134.4v9.6" stroke="#b5b6b9" stroke-width="0.7"/><rect x="620.6" y="140.6" width="7.4" height="5.2" rx="0.8" fill="#3a3b3e"/><rect x="622.6" y="139.6" width="3" height="1.4" fill="#3a3b3e"/><circle cx="624.3" cy="143.2" r="1.4" fill="#c9cacc"/>
<!-- datum display -->
<g stroke="#a78b2d" stroke-width="1.1" fill="none"><path d="M636.2,134.2l2.6,2.6 M638.8,134.2l-2.6,2.6"/><path d="M643.4,133.8l-1.4,2.8 M641,139.2l-1.4,2.8 M638.6,144.4l-1.4,2.8"/><path d="M642.6,138.6l5,7 M647.6,138.6l-5,7 M641.8,142.1h6.6 M645.1,137.8v8.6"/></g><path d="M650.6,146.5 l-1.6,1.6 h1.6z" fill="#444"/>
<!-- layers -->
<rect x="657.6" y="138.2" width="7.6" height="5" fill="#9fd0e6" stroke="#6fb0cc" stroke-width="0.6"/><rect x="659.2" y="140.2" width="7.6" height="5" fill="#7cc0dd" stroke="#4f9dbd" stroke-width="0.6"/><rect x="660.8" y="142.2" width="7.6" height="4.4" fill="#4ea7cc" stroke="#3a8eb3" stroke-width="0.6"/><path d="M660,136.6 q0.6,-2.2 3.4,-2.2" stroke="#333" stroke-width="1" fill="none"/><path d="M662.6,132.6 l2.4,1.8 l-2.4,1.8z" fill="#333"/><path d="M666,134.4h3.4v6h-2" stroke="#8a8b8e" stroke-width="1.2" fill="none"/>
<!-- annotation display -->
<g stroke="#3a3b3e" stroke-width="0.9" fill="none"><path d="M679,133.4v4.6 M687.6,133.4v4.6 M679.6,135.4h7.4"/></g><path d="M679.2,135.4l1.8,-1.1v2.2z M687.4,135.4l-1.8,-1.1v2.2z" fill="#3a3b3e"/><path d="M679,138.6v4.6 M687.6,138.6v3" stroke="#6b9fcf" stroke-width="0.7" stroke-dasharray="1 0.8"/><path d="M681.6,141.4h3.6 M683.4,139.4v2" stroke="#5a96c8" stroke-width="0.8"/><circle cx="679.2" cy="145" r="0.9" fill="#fff" stroke="#888" stroke-width="0.5"/><ellipse cx="686.6" cy="144.6" rx="3.4" ry="2" fill="#2f3033"/><ellipse cx="686.6" cy="144.6" rx="1.2" ry="0.9" fill="#d8d8da"/><path d="M692.4,146.5 l-1.6,1.6 h1.6z" fill="#444"/>
<!-- spin center -->
<rect x="699" y="134.6" width="6.2" height="3.6" fill="#fbf6df" stroke="#bcae72" stroke-width="0.7"/><path d="M705.2,136.4h4.2v3.4" stroke="#3a3b3e" stroke-width="0.9" fill="none"/><path d="M709.4,141.2l-1.5,-2.2h3z" fill="#3a3b3e"/><ellipse cx="708" cy="144.4" rx="3.6" ry="2.1" fill="#2f3033"/><ellipse cx="708" cy="144.4" rx="1.3" ry="0.9" fill="#e0e0e2"/>
<!-- graph (selected) -->
<rect x="716.8" y="131.2" width="17.8" height="17.2" fill="#e3e5e7" stroke="#b7babd" stroke-width="0.8"/>
<path d="M721.6,135.4 L726.4,140 L731.4,139.6 M726.4,140 L721.8,144.6" stroke="#5a5b5e" stroke-width="1.1" fill="none"/><circle cx="721.4" cy="135.2" r="1.8" fill="#55a877"/><circle cx="731.6" cy="139.6" r="1.9" fill="#d9606a"/><circle cx="721.6" cy="144.8" r="1.9" fill="#4a9fc4"/>
</svg>

<div class="a" style="left:221px;top:207px;width:252px;height:255.6px;background:#eeeff1;border:1px solid #b4b7bb;box-shadow:inset 0 0 0 1px #e6e8ea">
 <div class="a" style="left:1px;top:1px;width:248px;height:16.2px;background:linear-gradient(#f4f5f6,#e9eaec);border-bottom:1px solid #dcdee1"></div>
 <div class="t" style="left:100px;top:4px;font-weight:bold;font-size:9px;color:#57585b;line-height:11px;height:11px">References</div>
 <div class="a" style="left:206px;top:10px;width:6px;height:2px;background:#6a6b6e"></div>
 <div class="a" style="left:221px;top:5.5px;width:8px;height:7px;border:1px solid #6a6b6e;border-top-width:2px"></div>
 <svg class="a" style="left:236px;top:5px" width="8" height="8" viewBox="0 0 8 8"><path d="M1,1 L7,7 M7,1 L1,7" stroke="#5d5e61" stroke-width="1.6"/></svg>
 <div class="a" style="left:9.8px;top:28.5px;width:231.5px;height:72.8px;background:#fff;border:1px solid #c6c9cd"></div>
 <div class="t" style="left:19.8px;top:32.5px">SYS_0:F1(CSYS):AG409557</div>
 <div class="a" style="left:9.8px;top:104.3px;width:30.5px;height:21.5px;background:linear-gradient(#c3c5c8,#d2d4d7);border:1px solid #8f9296;border-radius:2px"></div>
 <svg class="a" style="left:19.1px;top:107.2px" width="12.2" height="15.9" viewBox="0 0 10 13"><path d="M1.5,1 L1.5,9.6 L3.7,7.6 L5.4,11.4 L6.8,10.8 L5.1,7.2 L7.9,7.2 Z" fill="#fff" stroke="#333" stroke-width="0.8" stroke-linejoin="round"/></svg>
 <div class="a" style="left:44px;top:104.3px;width:56.8px;height:21.5px;background:linear-gradient(#fbfbfc,#eff0f2);border:1px solid #c3c6ca;border-radius:2px"></div>
 <svg class="a" style="left:53.8px;top:107.2px" width="12.2" height="15.9" viewBox="0 0 10 13"><path d="M1.5,1 L1.5,9.6 L3.7,7.6 L5.4,11.4 L6.8,10.8 L5.1,7.2 L7.9,7.2 Z" fill="#fff" stroke="#333" stroke-width="0.8" stroke-linejoin="round"/></svg>
 <div class="t" style="left:70.2px;top:110.3px;font-weight:bold;font-size:8.6px;color:#444">X sec</div>
 <div class="t" style="left:113.3px;top:110px">Select:</div>
 <div class="a" style="left:140.6px;top:106.8px;width:100.4px;height:15.8px;background:#fff;border:1px solid #c6c9cd"></div>
 <div class="a" style="left:229px;top:107.8px;width:11px;height:13.8px;background:#f4f5f6;border-left:1px solid #d5d7da"></div>
 <div class="dd" style="left:232.2px;top:113.6px;border-top-color:#77797c"></div>
 <div class="t" style="left:147.1px;top:109.8px;letter-spacing:0.14px">Use Edge/Offset</div>
 <div class="a" style="left:2px;top:129.4px;width:247px;height:1px;background:#dfe1e4"></div>
 <div class="a" style="left:9.6px;top:135.2px;width:47.5px;height:16px;background:#f1f2f4;border:1px solid #d6d8db;border-radius:2px"></div>
 <div class="a" style="left:61.4px;top:135.2px;width:42.2px;height:16px;background:#f1f2f4;border:1px solid #d6d8db;border-radius:2px"></div>
 <div class="a" style="left:107.4px;top:135.2px;width:37.5px;height:16px;background:#f1f2f4;border:1px solid #d6d8db;border-radius:2px"></div>
 <div class="t" style="left:9.6px;top:138.4px;width:47.5px;text-align:center;color:#a4a7ab;font-weight:bold">Replace</div>
 <div class="t" style="left:61.4px;top:138.4px;width:42.2px;text-align:center;color:#a4a7ab;font-weight:bold">Delete</div>
 <div class="t" style="left:107.4px;top:138.4px;width:37.5px;text-align:center;color:#a4a7ab;font-weight:bold">Solve</div>
 <div class="a" style="left:9.6px;top:167px;width:231px;height:38.5px;border:1px solid #c9ccd0"></div>
 <div class="t" style="left:20.4px;top:162.8px;background:#eeeff1;padding:0 3px;font-size:7.6px;color:#333;-webkit-text-stroke:0.32px #333">Reference status</div>
 <div class="t" style="left:23.4px;top:182.2px">Fully Placed</div>
 <div class="a" style="left:2px;top:218.4px;width:247px;height:1px;background:#dfe1e4"></div>
 <div class="a" style="left:200.4px;top:226.6px;width:39.8px;height:17.2px;background:linear-gradient(#fbfbfc,#eff0f2);border:1px solid #c3c6ca;border-radius:2px"></div>
 <div class="t" style="left:200.4px;top:230.2px;width:39.8px;text-align:center;font-weight:bold;font-size:8.6px;color:#444">Close</div>
</div>

</div></body></html>
